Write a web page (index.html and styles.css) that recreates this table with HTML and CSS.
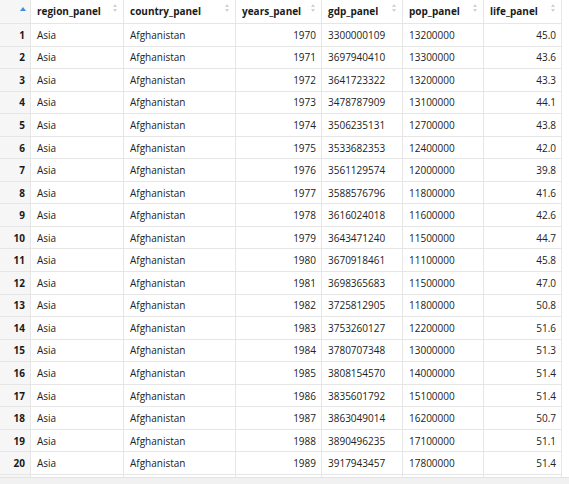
FILE: index.html
```html
<!DOCTYPE html>
<html>
<head>
<meta charset="utf-8">
<link rel="stylesheet" href="styles.css">
</head>
<body>
<div class="viewer">
  <div class="grid-wrap">
    <table class="grid">
      <colgroup>
        <col class="c-num"><col class="c-region"><col class="c-country"><col class="c-years"><col class="c-gdp"><col class="c-pop"><col class="c-life">
      </colgroup>
      <thead>
        <tr>
          <th class="num-head"><div class="th-inner th-end"><svg class="sort-active" width="6" height="4" viewBox="0 0 6 4"><path d="M0 4 L3 0 L6 4 Z"/></svg></div></th>
          <th><div class="th-inner"><span>region_panel</span><svg class="sort" width="4" height="8" viewBox="0 0 4 8"><path d="M0 3 L2 0 L4 3 Z M0 5 L2 8 L4 5 Z"/></svg></div></th>
          <th><div class="th-inner"><span>country_panel</span><svg class="sort" width="4" height="8" viewBox="0 0 4 8"><path d="M0 3 L2 0 L4 3 Z M0 5 L2 8 L4 5 Z"/></svg></div></th>
          <th><div class="th-inner"><span>years_panel</span><svg class="sort" width="4" height="8" viewBox="0 0 4 8"><path d="M0 3 L2 0 L4 3 Z M0 5 L2 8 L4 5 Z"/></svg></div></th>
          <th><div class="th-inner"><span>gdp_panel</span><svg class="sort" width="4" height="8" viewBox="0 0 4 8"><path d="M0 3 L2 0 L4 3 Z M0 5 L2 8 L4 5 Z"/></svg></div></th>
          <th><div class="th-inner"><span>pop_panel</span><svg class="sort" width="4" height="8" viewBox="0 0 4 8"><path d="M0 3 L2 0 L4 3 Z M0 5 L2 8 L4 5 Z"/></svg></div></th>
          <th><div class="th-inner"><span>life_panel</span><svg class="sort" width="4" height="8" viewBox="0 0 4 8"><path d="M0 3 L2 0 L4 3 Z M0 5 L2 8 L4 5 Z"/></svg></div></th>
        </tr>
      </thead>
      <tbody>
        <tr><td class="num">1</td><td>Asia</td><td>Afghanistan</td><td class="r">1970</td><td>3300000109</td><td>13200000</td><td class="r">45.0</td></tr>
        <tr><td class="num">2</td><td>Asia</td><td>Afghanistan</td><td class="r">1971</td><td>3697940410</td><td>13300000</td><td class="r">43.6</td></tr>
        <tr><td class="num">3</td><td>Asia</td><td>Afghanistan</td><td class="r">1972</td><td>3641723322</td><td>13200000</td><td class="r">43.3</td></tr>
        <tr><td class="num">4</td><td>Asia</td><td>Afghanistan</td><td class="r">1973</td><td>3478787909</td><td>13100000</td><td class="r">44.1</td></tr>
        <tr><td class="num">5</td><td>Asia</td><td>Afghanistan</td><td class="r">1974</td><td>3506235131</td><td>12700000</td><td class="r">43.8</td></tr>
        <tr><td class="num">6</td><td>Asia</td><td>Afghanistan</td><td class="r">1975</td><td>3533682353</td><td>12400000</td><td class="r">42.0</td></tr>
        <tr><td class="num">7</td><td>Asia</td><td>Afghanistan</td><td class="r">1976</td><td>3561129574</td><td>12000000</td><td class="r">39.8</td></tr>
        <tr><td class="num">8</td><td>Asia</td><td>Afghanistan</td><td class="r">1977</td><td>3588576796</td><td>11800000</td><td class="r">41.6</td></tr>
        <tr><td class="num">9</td><td>Asia</td><td>Afghanistan</td><td class="r">1978</td><td>3616024018</td><td>11600000</td><td class="r">42.6</td></tr>
        <tr><td class="num">10</td><td>Asia</td><td>Afghanistan</td><td class="r">1979</td><td>3643471240</td><td>11500000</td><td class="r">44.7</td></tr>
        <tr><td class="num">11</td><td>Asia</td><td>Afghanistan</td><td class="r">1980</td><td>3670918461</td><td>11100000</td><td class="r">45.8</td></tr>
        <tr><td class="num">12</td><td>Asia</td><td>Afghanistan</td><td class="r">1981</td><td>3698365683</td><td>11500000</td><td class="r">47.0</td></tr>
        <tr><td class="num">13</td><td>Asia</td><td>Afghanistan</td><td class="r">1982</td><td>3725812905</td><td>11800000</td><td class="r">50.8</td></tr>
        <tr><td class="num">14</td><td>Asia</td><td>Afghanistan</td><td class="r">1983</td><td>3753260127</td><td>12200000</td><td class="r">51.6</td></tr>
        <tr><td class="num">15</td><td>Asia</td><td>Afghanistan</td><td class="r">1984</td><td>3780707348</td><td>13000000</td><td class="r">51.3</td></tr>
        <tr><td class="num">16</td><td>Asia</td><td>Afghanistan</td><td class="r">1985</td><td>3808154570</td><td>14000000</td><td class="r">51.4</td></tr>
        <tr><td class="num">17</td><td>Asia</td><td>Afghanistan</td><td class="r">1986</td><td>3835601792</td><td>15100000</td><td class="r">51.4</td></tr>
        <tr><td class="num">18</td><td>Asia</td><td>Afghanistan</td><td class="r">1987</td><td>3863049014</td><td>16200000</td><td class="r">50.7</td></tr>
        <tr><td class="num">19</td><td>Asia</td><td>Afghanistan</td><td class="r">1988</td><td>3890496235</td><td>17100000</td><td class="r">51.1</td></tr>
        <tr><td class="num">20</td><td>Asia</td><td>Afghanistan</td><td class="r">1989</td><td>3917943457</td><td>17800000</td><td class="r">51.4</td></tr>
        <tr><td class="num"></td><td></td><td></td><td class="r"></td><td></td><td></td><td class="r"></td></tr>
      </tbody>
    </table>
  </div>
  <div class="hscroll"></div>
</div>
</body>
</html>
```

FILE: styles.css
```css
html, body {
  margin: 0;
  padding: 0;
  background: #ffffff;
}

.viewer {
  width: 569px;
  height: 484px;
  display: flex;
  flex-direction: column;
  overflow: hidden;
  font-family: "Open Sans", "Noto Sans", sans-serif;
  font-size: 10px;
  color: #222222;
}

.grid-wrap {
  height: 477px;
  overflow: hidden;
  flex: none;
}

.grid {
  table-layout: fixed;
  border-collapse: separate;
  border-spacing: 0;
  width: 562px;
}

.c-num { width: 31px; }
.c-region { width: 93px; }
.c-country { width: 112px; }
.c-years { width: 86px; }
.c-gdp { width: 81px; }
.c-pop { width: 81px; }
.c-life { width: 78px; }

.grid th,
.grid td {
  box-sizing: border-box;
  border-right: 1px solid #e6e6e6;
  border-bottom: 1px solid #e6e6e6;
  white-space: nowrap;
  overflow: hidden;
}

.grid th {
  height: 24px;
  padding: 0 6px 0 6px;
  font-weight: 700;
  text-align: left;
  vertical-align: top;
  color: #1a1a1a;
}

.th-inner {
  display: flex;
  justify-content: space-between;
  align-items: flex-start;
  height: 23px;
}

.th-inner span {
  line-height: 23px;
}

.th-inner .sort {
  margin-top: 4px;
  margin-right: 0;
  fill: #d2d2d2;
  flex: none;
}

.th-end {
  justify-content: flex-end;
}

.sort-active {
  margin-top: 7px;
  margin-right: -2px;
  fill: #3d8fe0;
}

.grid th.num-head {
  background: #f6f6f6;
}

.grid td {
  height: 22.55px;
  padding: 0 5px 0 6px;
  line-height: 14px;
  vertical-align: middle;
}

.grid td.r {
  text-align: right;
}

.grid td.num {
  background: #f6f6f6;
  font-weight: 700;
  text-align: right;
  padding: 0 5px 0 2px;
  color: #1a1a1a;
}

.hscroll {
  flex: 1;
  background: #f1f1f1;
  border-top: 1px solid #e4e4e4;
}
```
